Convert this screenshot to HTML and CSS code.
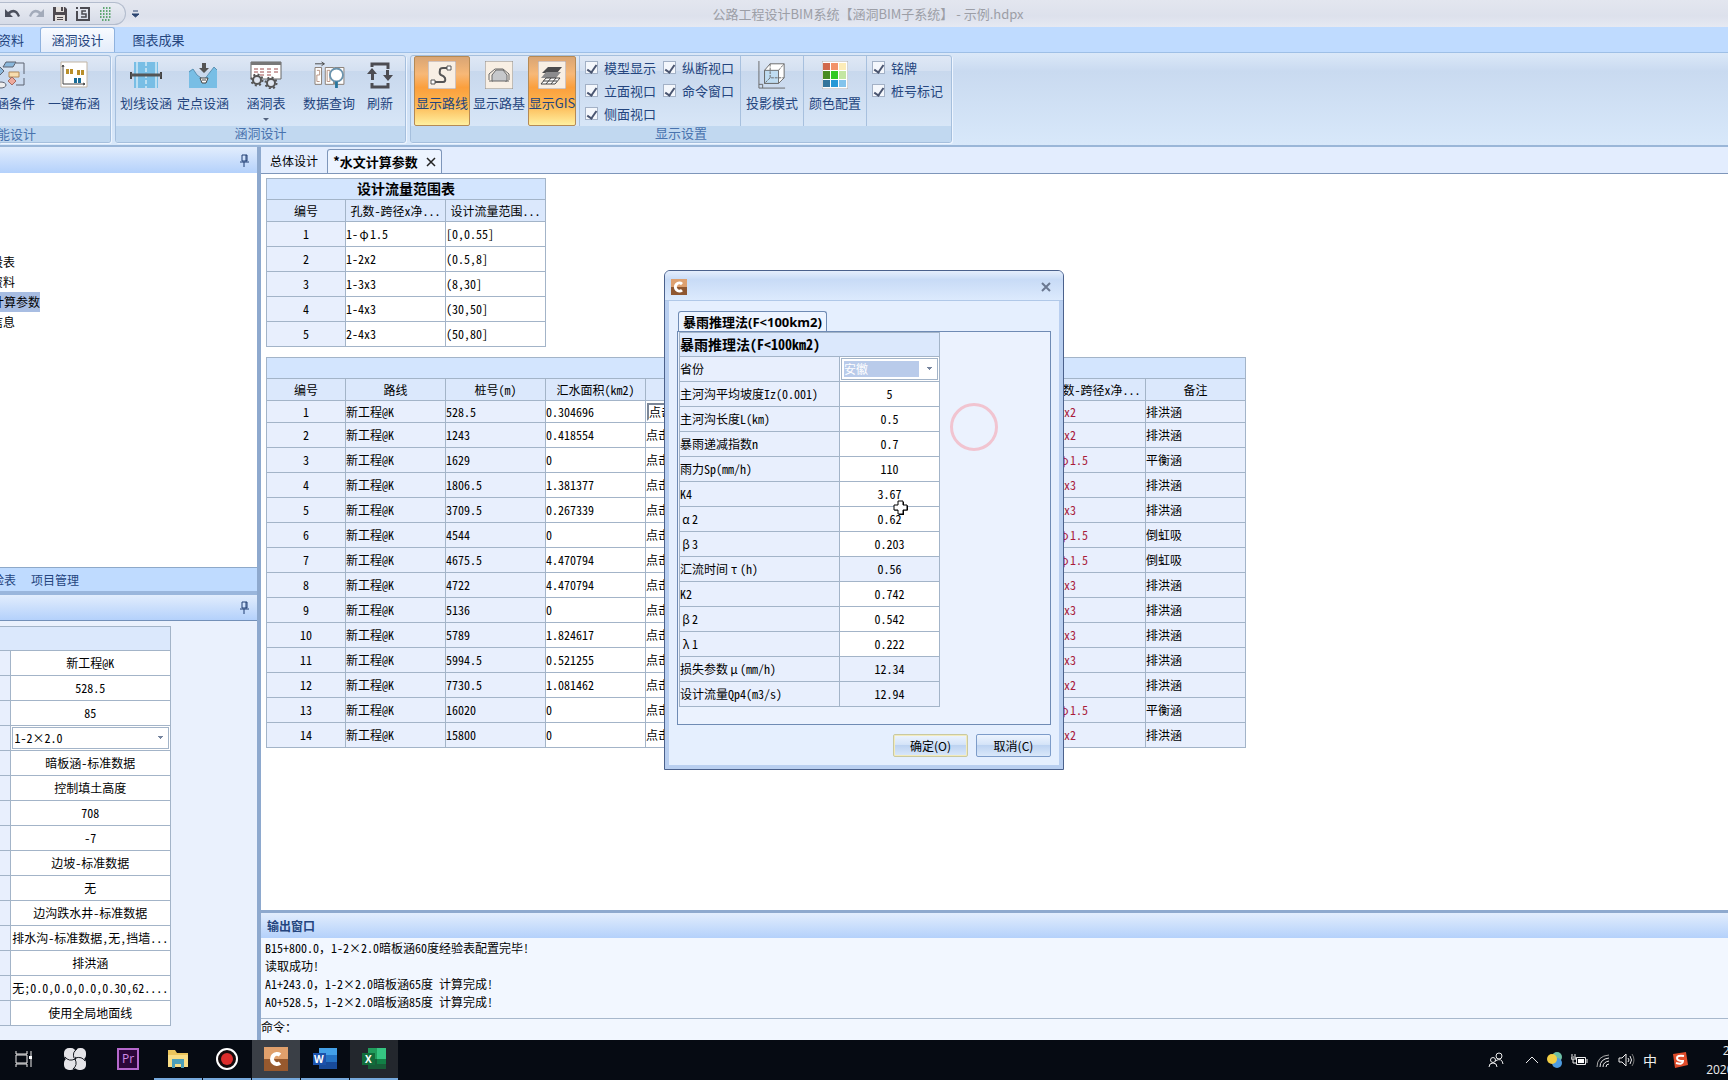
FILE: index.html
```html
<!DOCTYPE html>
<html lang="zh-CN">
<head>
    <meta charset="UTF-8">
    <title>公路工程设计BIM系统</title>
    <link rel="stylesheet" href="styles.css">
</head>
<body>
    <header class="title-bar">
        <div class="quick-bar">
            <button class="quick-btn" aria-label="撤销"><svg width="17" height="16" viewBox="0 0 17 16"><path d="M1 3v8h8L6 8q5-4 8 3l2-1Q12 0 4 6z" fill="#4b4f5c"/></svg></button>
            <button class="quick-btn" aria-label="重做"><svg width="17" height="16" viewBox="0 0 17 16"><path d="M16 3v8H8l3-3q-5-4-8 3l-2-1Q5 0 13 6z" fill="#a3abba"/></svg></button>
            <button class="quick-btn" aria-label="保存"><svg width="16" height="16" viewBox="0 0 16 16"><path d="M1 1h12l2 2v12H1z" fill="#4e4a50"/><path d="M4 1h8v5H4zM3 9h10v6H3z" fill="#e4e0dd"/><path d="M9 1h2v4H9zM5 11h6v1H5zM5 13h6v1H5z" fill="#4e4a50"/></svg></button>
            <button class="quick-btn" aria-label="另存"><svg width="16" height="16" viewBox="0 0 16 16"><path d="M5 2h9v12H2V5M2 1v2" fill="none" stroke="#4b4b52" stroke-width="2"/><path d="M11 5H7v3h4v3H6" fill="none" stroke="#4b4b52" stroke-width="1.500"/></svg></button>
            <button class="quick-btn" aria-label="网格"><svg width="16" height="16" viewBox="0 0 16 16"><path d="M5 2h9M2 5h12M2 8h12M2 11h12M4 14h9" stroke="#35924a" stroke-width="1.500" stroke-dasharray="1.500 1.500"/></svg></button>
        </div>
        <svg class="quick-more" width="8" height="8" viewBox="0 0 8 8"><path d="M1 1h5M0 4h7L3.500 7z" fill="#2b4470" stroke="#2b4470"/></svg>
        <h1>公路工程设计BIM系统【涵洞BIM子系统】 - 示例.hdpx</h1>
    </header>

    <nav class="ribbon-tabs">
        <button class="ribbon-tab cut">基础资料</button>
        <button class="ribbon-tab active">涵洞设计</button>
        <button class="ribbon-tab">图表成果</button>
    </nav>

    <section class="ribbon">
        <div class="group group-smart">
            <div class="group-body">
                <button class="tool"><svg width="34" height="28" viewBox="0 0 34 28"><path d="M14 1h10l-3 5H11zM4 10l4-4 4 4-4 4z" fill="#8bb8dc" stroke="#5c6270"/><path d="M24 2h8v11M18 13v4M24 24h8v-7M6 14v8h5" fill="none" stroke="#5c6270"/><path d="M17 11h10v5H17z" fill="#f7dcae" stroke="#b38a5a"/><path d="M16 20l4-4 4 4-4 4z" fill="#eda99b" stroke="#a66a60"/><ellipse cx="9" cy="24" rx="5" ry="3" fill="#eee" stroke="#5c6270"/></svg><span>布涵条件</span></button>
                <button class="tool"><svg width="28" height="28" viewBox="0 0 28 28"><path d="M1 1h26v25H1z" fill="#fff" stroke="#c1b5a5"/><path d="M3 4v19h22M2 6l1-2 1 2M23 22l2 1-2 1" fill="none" stroke="#444"/><path d="M6 8h3v5H6zM10 8h3v5h-3zM17 9h3v5h-3zM21 9h3v5h-3z" fill="#b98f2b"/><path d="M14 17h3v5h-3zM18 17h3v5h-3z" fill="#176c98"/></svg><span>一键布涵</span></button>
            </div>
            <div class="group-name cut">智能设计</div>
        </div>
        <div class="group group-culvert">
            <div class="group-body">
                <button class="tool"><svg width="32" height="28" viewBox="0 0 32 28"><path d="M4 1h24v26H4z" fill="#78bee5"/><path d="M7 1v26M26 1v26" stroke="#fff"/><path d="M16 1v26" stroke="#fff" stroke-dasharray="4 2"/><path d="M1 11v7M31 11v7" stroke="#444" stroke-width="2"/><path d="M1 14h30" stroke="#555" stroke-width="3"/></svg><span>划线设涵</span></button>
                <button class="tool"><svg width="30" height="28" viewBox="0 0 30 28"><path d="M1 10l4-2 4 6 7 5 10-13 3 3v18H1z" fill="#78bee5"/><path d="M1 11l4-3 4 6 7 5 10-13 3 3" fill="none" stroke="#5d93b4"/><path d="M14 2h4v5h3l-5 5-5-5h3z" fill="#555"/><path d="M12 17h8l-2 5h-4zM14 19h4" fill="#fff" stroke="#444"/></svg><span>定点设涵</span></button>
                <button class="tool wide"><svg width="32" height="28" viewBox="0 0 32 28"><path d="M1 1h30v17H1z" fill="#fff" stroke="#666"/><path d="M1 1h30v3H1z" fill="#777"/><path d="M4 8h4M10 8h4M17 8h4M24 8h4M4 11h4M10 11h4M17 11h4M24 11h4M10 14h4M17 14h4" stroke="#9c4b4b"/><circle cx="7" cy="19" r="4" fill="#dfe6f0" stroke="#555" stroke-width="2"/><circle cx="7" cy="19" r="5.500" fill="none" stroke="#555" stroke-width="2" stroke-dasharray="2 2.300"/><circle cx="21" cy="22" r="4" fill="#dfe6f0" stroke="#555" stroke-width="2"/><circle cx="21" cy="22" r="5.500" fill="none" stroke="#555" stroke-width="2" stroke-dasharray="2 2.300"/></svg><span>涵洞表</span><i class="arrow"></i></button>
                <button class="tool"><svg width="34" height="30" viewBox="0 0 34 30"><path d="M2 3h10M9 1l3 2-3 2" fill="none" stroke="#444"/><path d="M2 7h7v18H2zM13 7h9v18h-9zM23 7h10v18H23z" fill="#fff" stroke="#84796f"/><path d="M4 10h3v5H4v7h3M15 10h3v12h-3z" fill="none" stroke="#b58f7e"/><circle cx="25" cy="15" r="7" fill="#fff" stroke="#6c94ae" stroke-width="2"/><path d="M25 22v7" stroke="#26749d" stroke-width="3"/></svg><span>数据查询</span></button>
                <button class="tool slim"><svg width="26" height="28" viewBox="0 0 26 28"><path d="M5 6V3h16v5M5 22v4h16v-4" fill="none" stroke="#4c4c52" stroke-width="3"/><path d="M5 7l5 6H7v6H4v-6H0zM21 20l5-6h-4V9h-3v5h-3z" fill="#4c4c52"/></svg><span>刷新</span></button>
            </div>
            <div class="group-name">涵洞设计</div>
        </div>
        <div class="group group-view">
            <div class="group-body">
                <button class="tool on"><svg width="28" height="28" viewBox="0 0 28 28"><path d="M0 0h28v28H0z" fill="#f8efe4" stroke="#a99"/><path d="M7 21h8q3 0 2-4-1-2-4-3-2-1-1-5 0-2 3-2h4" fill="none" stroke="#555" stroke-width="2"/><path d="M3 19h4v4H3zM19 5h4v4h-4z" fill="#fff" stroke="#555"/></svg><span>显示路线</span></button>
                <button class="tool"><svg width="28" height="28" viewBox="0 0 28 28"><path d="M0 0h28v28H0z" fill="#f8efe4" stroke="#888"/><path d="M4 19v-6l6-5h8l6 5v6M4 20h4M20 20h4" fill="none" stroke="#666"/><path d="M7 20v-6l4-5h7l4 5v6z" fill="#c6c8cb" stroke="#666"/></svg><span>显示路基</span></button>
                <button class="tool on slim"><svg width="28" height="28" viewBox="0 0 28 28"><path d="M0 0h28v28H0z" fill="#f8efe4" stroke="#a99"/><path d="M10 6h14l-5 6H4z" fill="#4b4b4d"/><path d="M8 11h15l-5 6H3z" fill="#8b8b8d"/><path d="M8 17h14l-5 6H3zM5 20h14M13 17l-5 6M18 17l-5 6" fill="#fff" stroke="#444"/></svg><span>显示GIS</span></button>
                <div class="checks checks-two">
                    <label><input type="checkbox" checked>模型显示</label>
                    <label><input type="checkbox" checked>纵断视口</label>
                    <label><input type="checkbox" checked>立面视口</label>
                    <label><input type="checkbox" checked>命令窗口</label>
                    <label><input type="checkbox" checked>侧面视口</label>
                </div>
                <div class="sep"><button class="tool"><svg width="30" height="30" viewBox="0 0 30 30"><path d="M1 0v29h28M1 25h4v4" fill="none" stroke="#666"/><path d="M7 10l6-7h15v15l-6 6H7z" fill="#fff" stroke="#666"/><path d="M7 10h15v14H7z" fill="#bfdcf1" stroke="#666"/><path d="M22 10l6-7M13 3v15h15M13 18l-6 6" fill="none" stroke="#666" stroke-dasharray="3 1"/></svg><span>投影模式</span></button></div>
                <div class="sep"><button class="tool"><svg width="26" height="28" viewBox="0 0 26 28"><path d="M0 0h26v28H0z" fill="#fff" stroke="#aaa"/><path d="M1 2h7v7H1z" fill="#d1694b"/><path d="M9 2h7v7H9z" fill="#f29268"/><path d="M17 2h7v7h-7z" fill="#fcecb8"/><path d="M1 10h7v8H1z" fill="#478b21"/><path d="M9 10h7v8H9z" fill="#31c923"/><path d="M17 10h7v8h-7z" fill="#c3e6a1"/><path d="M1 19h7v7H1z" fill="#33759b"/><path d="M9 19h7v7H9z" fill="#2799d6"/><path d="M17 19h7v7h-7z" fill="#83c4ec"/></svg><span>颜色配置</span></button></div>
                <div class="checks">
                    <label><input type="checkbox" checked>铭牌</label>
                    <label><input type="checkbox" checked>桩号标记</label>
                </div>
            </div>
            <div class="group-name">显示设置</div>
        </div>
    </section>

    <main class="workspace">
        <aside class="side">
            <div class="panel-head"><svg class="pin" width="9" height="13" viewBox="0 0 9 13"><path d="M2 1h5v6H2zM0 8h9M4 8v5M6 1v6" fill="none" stroke="#1f3d73"/></svg></div>
            <ul class="tree">
                <li><span class="w1">分段表</span></li>
                <li><span class="w1">基本资料</span></li>
                <li><span class="w2">水文计算参数</span></li>
                <li><span class="w1">项目信息</span></li>
            </ul>
            <div class="side-tabs">
                <button class="cut">经验表</button>
                <button>项目管理</button>
            </div>
            <div class="panel-head props-head"><svg class="pin" width="9" height="13" viewBox="0 0 9 13"><path d="M2 1h5v6H2zM0 8h9M4 8v5M6 1v6" fill="none" stroke="#1f3d73"/></svg></div>
            <div class="props">
                <table class="grid prop-table">
                    <colgroup><col class="c-edge"><col class="c-prop"></colgroup>
                    <tbody id="propBody"><tr class="prop-title"><td colspan="2"></td></tr></tbody>
                </table>
            </div>
        </aside>

        <section class="docs">
            <div class="doc-tabs">
                <button class="doc-tab">总体设计</button>
                <button class="doc-tab current">*水文计算参数 <svg width="10" height="10" viewBox="0 0 10 10"><path d="M1 1l8 8M9 1L1 9" stroke="#222" stroke-width="1.500"/></svg></button>
            </div>
            <div class="sheet">
                <table class="grid range-table">
                    <colgroup><col class="c-no"><col class="c-100"><col class="c-100"></colgroup>
                    <thead>
                        <tr class="caption"><th colspan="3">设计流量范围表</th></tr>
                        <tr><th>编号</th><th>孔数-跨径x净...</th><th>设计流量范围...</th></tr>
                    </thead>
                    <tbody>
                        <tr><td class="no">1</td><td>1-<i class="greek">φ</i>1.5</td><td>[0,0.55]</td></tr>
                        <tr><td class="no">2</td><td>1-2x2</td><td>(0.5,8]</td></tr>
                        <tr><td class="no">3</td><td>1-3x3</td><td>(8,30]</td></tr>
                        <tr><td class="no">4</td><td>1-4x3</td><td>(30,50]</td></tr>
                        <tr><td class="no">5</td><td>2-4x3</td><td>(50,80]</td></tr>
                    </tbody>
                </table>
                <table class="grid flow-table">
                    <colgroup><col class="c-no"><col class="c-100" span="9"></colgroup>
                    <thead>
                        <tr class="caption"><th colspan="10">水文计算表</th></tr>
                        <tr><th>编号</th><th>路线</th><th>桩号(m)</th><th>汇水面积(km2)</th><th></th><th></th><th></th><th></th><th>孔数-跨径x净...</th><th>备注</th></tr>
                    </thead>
                    <tbody id="flowBody"></tbody>
                </table>
            </div>
            <div class="output">
                <h2>输出窗口</h2>
                <div class="log">
                    <p>B15+800.0，1-2×2.0暗板涵60度经验表配置完毕!</p>
                    <p>读取成功!</p>
                    <p>A1+243.0，1-2×2.0暗板涵65度 计算完成!</p>
                    <p>A0+528.5，1-2×2.0暗板涵85度 计算完成!</p>
                </div>
                <label class="command">命令：<input type="text"></label>
            </div>
        </section>
    </main>

    <div class="dialog" role="dialog" aria-label="暴雨推理法">
        <div class="dialog-title">
            <svg width="16" height="16" viewBox="0 0 16 16"><path d="M0 0h16v8H0z" fill="#dda070"/><path d="M0 8h16v8H0z" fill="#8f5731"/><path d="M11 5a4 4 0 1 0 0 6" fill="none" stroke="#fff" stroke-width="3"/></svg>
            <button aria-label="关闭"><svg width="10" height="10" viewBox="0 0 10 10"><path d="M1 1l8 8M9 1L1 9" stroke="#6b7891" stroke-width="2"/></svg></button>
        </div>
        <div class="dialog-body">
            <button class="dialog-tab">暴雨推理法(F&lt;100km2)</button>
            <div class="dialog-page">
                <table class="grid calc-table">
                    <colgroup><col class="c-label"><col class="c-100"></colgroup>
                    <thead><tr><th colspan="2">暴雨推理法(F&lt;100km2)</th></tr></thead>
                    <tbody id="calcBody">
                        <tr><td class="ro"><label for="province">省份</label></td><td class="combo"><select id="province"><option>安徽</option></select></td></tr>
                    </tbody>
                </table>
            </div>
            <div class="dialog-buttons">
                <button class="default">确定(O)</button>
                <button>取消(C)</button>
            </div>
        </div>
    </div>
    <div class="click-ring"></div>
    <svg class="cursor" width="16" height="16" viewBox="0 0 16 16"><path d="M6 2v3.500H1.500v5H6V15h5v-4.500h4v-5h-4V2z" fill="#000"/><path d="M5 1h5v4h4v5h-4v4H5v-4H1V5h4z" fill="#fff" stroke="#000"/></svg>

    <footer class="taskbar">
        <button class="task" aria-label="任务视图"><svg width="18" height="18" viewBox="0 0 18 18"><path d="M1 1v3h11V1M1 17v-3h11v3M1 5h11v8H1zM16 1v16" fill="none" stroke="#eee"/><path d="M14 6h3v3h-3z" fill="#fff"/></svg></button>
        <button class="task second" aria-label="助手"><svg width="22" height="22" viewBox="0 0 22 22"><rect x="0" y="0" width="12" height="12" rx="5" fill="#e4e4e8"/><rect x="11" y="0" width="11" height="12" rx="5" fill="#e4e4e8"/><rect x="0" y="10" width="12" height="12" rx="5" fill="#e4e4e8"/><rect x="10" y="10" width="12" height="12" rx="5" fill="#e4e4e8"/><path d="M13 1Q8 4 10 10M21 13q-3-5-10-3M9 21q5-4 2-10M1 9q4 5 10 2" fill="none" stroke="#15181f"/></svg></button>
        <button class="task third" aria-label="Premiere"><svg width="22" height="22" viewBox="0 0 22 22"><path d="M1 1h20v20H1z" fill="#2b0638" stroke="#b568cc" stroke-width="2"/><text x="5" y="15" class="pr-text">Pr</text></svg></button>
        <button class="task running" aria-label="文件管理器"><svg width="22" height="20" viewBox="0 0 22 20"><path d="M1 1h7l2 3h11v13H1z" fill="#eac45c"/><path d="M1 6h20v12H1z" fill="#f8dd86"/><path d="M5 10h12v9h-3v-4H8v4H5z" fill="#4c9fb9"/></svg></button>
        <button class="task running" aria-label="录屏"><svg width="22" height="22" viewBox="0 0 22 22"><circle cx="11" cy="11" r="10" fill="#160b0c" stroke="#fff" stroke-width="2"/><circle cx="11" cy="11" r="6" fill="#dc2d2c"/></svg></button>
        <button class="task running focus" aria-label="涵洞系统"><svg width="24" height="24" viewBox="0 0 24 24"><path d="M0 0h24v12H0z" fill="#e0a06c"/><path d="M0 12h24v12H0z" fill="#97592e"/><path d="M16 8a5 5 0 1 0 0 8" fill="none" stroke="#fff" stroke-width="4"/></svg></button>
        <button class="task running" aria-label="Word"><svg width="26" height="22" viewBox="0 0 26 22"><path d="M7 0h18v7H7z" fill="#43a0e8"/><path d="M7 7h18v7H7z" fill="#2573c4"/><path d="M7 14h18v7H7z" fill="#184b9a"/><path d="M1 5h13v12H1z" fill="#1b52ac"/><text x="2" y="15" class="office-text">W</text></svg></button>
        <button class="task running hover" aria-label="Excel"><svg width="26" height="22" viewBox="0 0 26 22"><path d="M7 0h18v11H7z" fill="#219c5c"/><path d="M16 0h9v11h-9z" fill="#35c481"/><path d="M7 11h18v10H7z" fill="#175e38"/><path d="M16 11h9v5h-9z" fill="#128046"/><path d="M1 5h13v12H1z" fill="#126c3b"/><text x="4" y="15" class="office-text">X</text></svg></button>
        <div class="tray">
            <svg width="16" height="16" viewBox="0 0 16 16"><g fill="none" stroke="#eee"><circle cx="11" cy="4" r="3"/><circle cx="5" cy="8" r="2.500"/><path d="M1 15q0-4 4-4t4 4M7 9q7-4 8 3"/></g></svg>
            <svg class="tray-up" width="14" height="8" viewBox="0 0 14 8"><path d="M1 7l6-6 6 6" fill="none" stroke="#eee"/></svg>
            <svg width="16" height="16" viewBox="0 0 16 16"><circle cx="10" cy="5" r="5" fill="#6ec0a5"/><circle cx="10" cy="11" r="5" fill="#4e9be0"/><circle cx="5" cy="7" r="5" fill="#f2cf45"/></svg>
            <svg width="17" height="12" viewBox="0 0 17 12"><path d="M5.500 3.500h9v7h-9z" fill="none" stroke="#eee"/><path d="M7 5h6v4H7z" fill="#fff"/><path d="M16 5v4M1 0v2M4 0v2M0 3h5v2H0zM2 5v4h3" stroke="#eee" fill="none"/></svg>
            <svg width="14" height="14" viewBox="0 0 14 14"><g fill="none" stroke="#aaa"><path d="M1 14Q1 3 13 2"/><path d="M4 14q0-8 9-9M7 14q0-5 6-6M10 14q0-3 3-3" stroke="#eee"/></g></svg>
            <svg width="17" height="14" viewBox="0 0 17 14"><g fill="none" stroke="#eee"><path d="M1 5h3l4-4v12L4 9H1z"/><path d="M10 5q2 2 0 4M12 3q3 4 0 8"/><path d="M14 1q4 6 0 12" stroke="#777"/></g></svg>
            <span class="ime">中</span>
            <svg class="sogou" width="16" height="16" viewBox="0 0 16 16"><path d="M1 2l13-2 2 13-13 3z" fill="#df4d2b"/><path d="M12 4Q5 3 5 6t6 3q0 4-7 2" fill="none" stroke="#fff" stroke-width="2"/></svg>
            <div class="clock">22:10<br>2020/12/12</div>
        </div>
    </footer>

    <script>
        // 希腊字母占一个全角
        const greek = s => s.replace(/[αβφτλμ]/g, '<i class="greek">$&</i>');

        // 路线均为 新工程@K：桩号、汇水面积、孔跨、备注
        const culverts = [
            ['528.5', '0.304696', '1-2x2', '排洪涵'],
            ['1243', '0.418554', '1-2x2', '排洪涵'],
            ['1629', '0', '1-φ1.5', '平衡涵'],
            ['1806.5', '1.381377', '1-4x3', '排洪涵'],
            ['3709.5', '0.267339', '1-3x3', '排洪涵'],
            ['4544', '0', '1-φ1.5', '倒虹吸'],
            ['4675.5', '4.470794', '1-φ1.5', '倒虹吸'],
            ['4722', '4.470794', '2-4x3', '排洪涵'],
            ['5136', '0', '1-3x3', '排洪涵'],
            ['5789', '1.824617', '1-4x3', '排洪涵'],
            ['5994.5', '0.521255', '1-3x3', '排洪涵'],
            ['7730.5', '1.081462', '1-2x2', '排洪涵'],
            ['16020', '0', '1-φ1.5', '平衡涵'],
            ['15800', '0', '1-2x2', '排洪涵']
        ];
        document.getElementById('flowBody').innerHTML = culverts.map((c, i) => `
            <tr><td class="no">${i + 1}</td><td class="ro">新工程@K</td><td class="ro">${c[0]}</td><td>${c[1]}</td>
            <td><button class="calc-btn">点击计算</button></td><td></td><td></td><td></td><td class="ro span">${greek(c[2])}</td><td class="ro">${c[3]}</td></tr>`).join('');

        // 第三项为 1 表示计算结果，只读
        const params = [
            ['主河沟平均坡度Iz(0.001)', '5'],
            ['主河沟长度L(km)', '0.5'],
            ['暴雨递减指数n', '0.7'],
            ['雨力Sp(mm/h)', '110'],
            ['K4', '3.67'],
            ['α2', '0.62'],
            ['β3', '0.203'],
            ['汇流时间τ(h)', '0.56', 1],
            ['K2', '0.742'],
            ['β2', '0.542'],
            ['λ1', '0.222'],
            ['损失参数μ(mm/h)', '12.34', 1],
            ['设计流量Qp4(m3/s)', '12.94', 1]
        ];
        document.getElementById('calcBody').innerHTML += params.map(p => `
            <tr><td class="ro">${greek(p[0])}</td><td class="val${p[2] ? ' ro' : ''}">${p[1]}</td></tr>`).join('');

        const props = ['新工程@K', '528.5', '85', null, '暗板涵-标准数据', '控制填土高度', '708', '-7', '边坡-标准数据',
            '无', '边沟跌水井-标准数据', '排水沟-标准数据,无,挡墙...', '排洪涵', '无;0.0,0.0,0.0,0.30,62....', '使用全局地面线'];
        document.getElementById('propBody').innerHTML += props.map(p => p === null
            ? '<tr><td class="ro"></td><td class="combo"><select aria-label="孔跨"><option>1-2×2.0</option></select></td></tr>'
            : `<tr><td class="ro"></td><td class="val">${p}</td></tr>`).join('');
    </script>
</body>
</html>
```

FILE: styles.css
```css
* {
    box-sizing: border-box;
}
body {
    margin: 0;
    height: 100vh;
    display: flex;
    flex-direction: column;
    overflow: hidden;
    background: #fff;
    color: #000;
    font: 12px/16px "Noto Sans Mono CJK SC", "Noto Sans CJK SC", sans-serif;
}
button, input, select {
    font: inherit;
    color: inherit;
    margin: 0;
    padding: 0;
    border: none;
    background: none;
}
svg {
    display: block;
    flex: none;
}
.title-bar, .ribbon-tabs, .ribbon, .taskbar {
    flex: none;
    font-family: "Noto Sans CJK SC", sans-serif;
    font-size: 13px;
}

/* 标题栏 */
.title-bar {
    display: flex;
    align-items: center;
    height: 27px;
    background: linear-gradient(#e3e6ef, #dde1ec 60%, #e6e9f2);
    position: relative;
}
.quick-bar {
    display: flex;
    align-items: center;
    gap: 7px;
    width: 126px;
    height: 23px;
    padding-left: 4px;
    border: 1px solid #b3bccd;
    border-left: none;
    border-radius: 0 12px 12px 0;
    background: linear-gradient(#e9ecf3, #d6dbe7);
}
.quick-more {
    margin-left: 6px;
}
h1 {
    position: absolute;
    left: 0;
    right: 0;
    margin: 0;
    padding-left: 8px;
    text-align: center;
    font-size: 13px;
    font-weight: normal;
    color: #9c9ea6;
}

/* 功能区 */
.ribbon-tabs {
    display: flex;
    align-items: flex-end;
    height: 26px;
    background: #bfdbff;
    border-bottom: 1px solid #9ebfe6;
    color: #24457e;
}
.ribbon-tab {
    width: 75px;
    height: 25px;
    margin-right: 6px;
}
.ribbon-tab.active {
    border: 1px solid #8fb2de;
    border-bottom: none;
    border-radius: 3px 3px 0 0;
    background: linear-gradient(#f8fbff, #e3ecfa);
}
.cut {
    display: flex;
    justify-content: flex-end;
    align-items: center;
    overflow: hidden;
    white-space: nowrap;
}
.ribbon-tab.cut {
    width: 24px;
    margin-right: 16px;
}
.ribbon {
    display: flex;
    gap: 4px;
    height: 94px;
    padding: 2px 0;
    background: linear-gradient(#dbe8f8, #c9daf0 20%, #d8e8fa);
    border-bottom: 2px solid #9ab6d8;
    color: #24457e;
}
.group {
    display: flex;
    flex-direction: column;
    border: 1px solid #a5bfdd;
    border-radius: 3px;
    background: linear-gradient(#dfe8f5, #d4e0f1 17%, #c8d8ed 18%, #dceafa);
    box-shadow: 1px 1px 0 #eef5ff;
    overflow: hidden;
}
.group-smart {
    width: 111px;
    border-left: none;
    border-radius: 0 3px 3px 0;
}
.group-culvert {
    width: 291px;
}
.group-view {
    width: 542px;
}
.group-body {
    flex: 1;
    display: flex;
    gap: 3px;
    padding: 0 3px;
}
.group-culvert .group-body {
    gap: 5px;
    padding-left: 4px;
}
.group-smart .group-body {
    justify-content: flex-end;
    gap: 13px;
    padding-right: 10px;
}
.group-name {
    height: 16px;
    background: #c1d8f0;
    text-align: center;
    line-height: 14px;
    color: #4973ae;
}
.group-smart .group-name {
    padding-right: 74px;
}
.tool {
    flex: none;
    width: 52px;
    height: 70px;
    display: flex;
    flex-direction: column;
    align-items: center;
    justify-content: flex-start;
    padding-top: 5px;
    white-space: nowrap;
}
.tool svg {
    height: 28px;
}
.tool span {
    margin-top: 6px;
}
.tool.wide {
    width: 64px;
}
.tool.slim {
    width: 40px;
}
.tool.on {
    width: 56px;
    border: 1px solid #b58a55;
    border-radius: 2px;
    padding-top: 4px;
    background: linear-gradient(#d9a574, #f7b877 25%, #fb9f3c 45%, #fcb651 70%, #fff0a0);
}
.tool.on.slim {
    width: 48px;
}
.arrow {
    margin-top: 7px;
    border: 3px solid transparent;
    border-top-color: #53637e;
}
.checks {
    display: grid;
    grid-auto-rows: 23px;
    gap: 0;
    padding-left: 5px;
    border-left: 1px solid #a7c0de;
}
.checks-two {
    grid-template-columns: 78px 76px;
    width: 161px;
    margin-right: -3px;
}
.checks label {
    display: flex;
    align-items: center;
    gap: 6px;
    white-space: nowrap;
}
.checks input {
    appearance: none;
    width: 13px;
    height: 13px;
    border: 1px solid #a3b1c6;
    background: #f4f7fc;
    display: grid;
    place-items: center;
}
.checks input:checked::before {
    content: "";
    width: 4px;
    height: 8px;
    border: solid #4a5570;
    border-width: 0 2px 2px 0;
    transform: rotate(35deg);
}
.sep {
    padding: 0 2px 0 5px;
    border-left: 1px solid #a7c0de;
}

/* 工作区 */
.workspace {
    flex: 1;
    min-height: 0;
    display: flex;
}
.side {
    flex: none;
    width: 261px;
    border-right: 4px solid #8ea9ce;
    display: flex;
    flex-direction: column;
    background: #eaf1fd;
}
.panel-head {
    flex: none;
    height: 26px;
    display: flex;
    align-items: center;
    justify-content: flex-end;
    padding-right: 8px;
    background: linear-gradient(#e2edfd, #b4d1fb);
}
.props-head {
    border-bottom: 1px solid #7390b8;
}
.tree {
    flex: 1;
    margin: 0;
    padding: 79px 0 0;
    list-style: none;
    background: #fff;
    border-bottom: 1px solid #8ea9c9;
}
.tree li {
    height: 20px;
}
.tree span {
    display: flex;
    justify-content: flex-end;
    overflow: hidden;
    white-space: nowrap;
    line-height: 20px;
}
.tree .w1 {
    width: 15px;
}
.tree .w2 {
    width: 40px;
    background: #a8bde2;
}
.side-tabs {
    flex: none;
    display: flex;
    gap: 15px;
    height: 27px;
    background: #bfdbff;
    border-bottom: 4px solid #9ab6dc;
    color: #24457e;
}
.side-tabs .cut {
    width: 16px;
}
.props {
    flex: none;
    height: 419px;
    padding-top: 5px;
}
.grid {
    border-collapse: collapse;
    table-layout: fixed;
}
.grid td, .grid th {
    height: 25px;
    padding: 0;
    border: 1px solid #a3b4c8;
    overflow: hidden;
    white-space: nowrap;
    font-weight: normal;
    background: #fff;
    line-height: 16px;
}
.grid th {
    height: 22px;
    background: #dbe8fc;
}
.grid .caption th {
    height: 21px;
    padding-bottom: 2px;
    background: #d3e5fe;
    font-size: 14px;
    font-weight: bold;
}
.grid .no {
    background: #e8effd;
    text-align: center;
}
.grid .ro {
    background: #e8effd;
}
.grid .val {
    text-align: center;
}
.grid .span {
    color: #a81c3c;
}
.greek {
    display: inline-block;
    width: 12px;
    text-align: center;
    font-style: normal;
}
.calc-btn {
    display: block;
}
.flow-table tr:first-child .calc-btn {
    width: 96px;
    height: 18px;
    margin-left: 1px;
    border: 2px solid #7c8797;
    border-color: #7c8797 #fff #fff #7c8797;
    line-height: 14px;
    text-align: left;
}
.c-edge { width: 10px; }
.c-prop { width: 160px; }
.c-no { width: 79px; }
.c-100 { width: 100px; }
.c-label { width: 160px; }
.prop-table {
    width: 171px;
}
.prop-table td:first-child {
    border-left: none;
}
.grid .prop-title td {
    height: 24px;
    background: #dbe8fc;
}
.grid .combo {
    padding: 0 1px;
}
.combo select {
    display: block;
    width: 100%;
    height: 22px;
    padding: 0 2px;
    appearance: none;
    border: 1px solid #a3b4c8;
    background: linear-gradient(#75849e, #75849e) no-repeat right 5px top 8px / 5px 1px,
        linear-gradient(#75849e, #75849e) no-repeat right 6px top 9px / 3px 1px,
        linear-gradient(#75849e, #75849e) no-repeat right 7px top 10px / 1px 1px, #fff;
}

/* 文档区 */
.docs {
    flex: 1;
    min-width: 0;
    display: flex;
    flex-direction: column;
}
.doc-tabs {
    flex: none;
    display: flex;
    align-items: flex-end;
    height: 27px;
    border-bottom: 1px solid #7e96ba;
    background: #e3edfe;
}
.doc-tab {
    width: 66px;
    height: 24px;
}
.doc-tab.current {
    display: flex;
    align-items: center;
    justify-content: center;
    gap: 8px;
    width: 115px;
    border: 1px solid #7e96ba;
    border-bottom: none;
    border-radius: 3px 3px 0 0;
    background: #edf4ff;
    font-size: 13px;
    font-weight: bold;
}
.sheet {
    flex: 1;
    min-height: 0;
    overflow: hidden;
    padding: 4px 5px;
}
.range-table {
    width: 280px;
}
.flow-table {
    width: 980px;
    margin-top: 10px;
}
.flow-table tr:first-child td {
    height: 22px;
}
.output {
    flex: none;
    border-top: 3px solid #8ea9ce;
    background: #f2f7ff;
}
h2 {
    margin: 0;
    height: 25px;
    padding-left: 6px;
    background: linear-gradient(#e2edfd, #b4d1fb);
    color: #24457e;
    font: bold 12px/25px "Noto Sans CJK SC", sans-serif;
}
.log {
    height: 81px;
    padding: 1px 4px;
    border-bottom: 1px solid #a8b8cc;
}
.log p {
    margin: 0;
    line-height: 18px;
}
.command {
    display: flex;
    height: 21px;
    line-height: 16px;
}
.command input {
    flex: 1;
}

/* 对话框 */
.dialog {
    position: absolute;
    left: 664px;
    top: 270px;
    width: 400px;
    border: 1px solid #4b618c;
    border-radius: 6px 6px 0 0;
    background: #b9cff0;
    padding: 0 4px 4px;
}
.dialog-title {
    height: 30px;
    margin: 0 -4px;
    padding: 2px 12px 0 6px;
    display: flex;
    align-items: center;
    justify-content: space-between;
    border-radius: 5px 5px 0 0;
    border-bottom: 1px solid #b0c8e8;
    background: linear-gradient(#e5eefc, #c8dbf6 30%, #dceafd);
}
.dialog-body {
    padding: 10px 8px 8px;
    background: #e5effe;
}
.dialog-tab {
    display: block;
    width: 149px;
    height: 20px;
    margin-left: 1px;
    border: 1px solid #6f8bb4;
    border-bottom: none;
    border-radius: 3px 3px 0 0;
    background: #edf4ff;
    font: bold 13px/18px "Open Sans", "Noto Sans CJK SC", sans-serif;
    white-space: nowrap;
}
.dialog-page {
    height: 394px;
    padding: 0 1px;
    border: 1px solid #6f8bb4;
    background: #ebf2fe;
}
.calc-table {
    width: 260px;
}
.grid.calc-table th {
    height: 24px;
    padding-bottom: 2px;
    text-align: left;
    font-size: 14px;
    font-weight: bold;
}
#province {
    color: #fff;
    background: linear-gradient(#75849e, #75849e) no-repeat right 5px top 8px / 5px 1px,
        linear-gradient(#75849e, #75849e) no-repeat right 6px top 9px / 3px 1px,
        linear-gradient(#75849e, #75849e) no-repeat right 7px top 10px / 1px 1px,
        linear-gradient(#b9cbea, #b9cbea) no-repeat 2px 2px / 75px 16px, #fff;
}
.dialog-buttons {
    display: flex;
    justify-content: flex-end;
    gap: 8px;
    padding-top: 9px;
}
.dialog-buttons button {
    width: 75px;
    height: 23px;
    border: 1px solid #7d9cc9;
    border-radius: 2px;
    background: linear-gradient(#edf4fe, #d5e4f8 45%, #bdd3f1 50%, #dae8fa);
    font-family: "Noto Sans CJK SC", sans-serif;
}
.dialog-buttons .default {
    border-color: #c9c9a0;
    box-shadow: inset 0 0 0 1px #f3ebbc;
}
.click-ring {
    position: absolute;
    left: 950px;
    top: 403px;
    width: 48px;
    height: 48px;
    border: 3px solid #f1c4d0;
    border-radius: 50%;
}
.cursor {
    position: absolute;
    left: 893px;
    top: 500px;
}

/* 任务栏 */
.taskbar {
    display: flex;
    gap: 1px;
    height: 40px;
    background: #060b13;
    color: #eee;
}
.task {
    width: 48px;
    display: grid;
    place-items: center;
    border-bottom: 2px solid transparent;
}
.task.second {
    width: 52px;
}
.task.third {
    width: 51px;
}
.task.running {
    border-bottom-color: #76a9dc;
}
.task.focus {
    background: #3a3f46;
}
.task.hover {
    background: #23272d;
}
.pr-text {
    font: 12px "Open Sans", sans-serif;
    fill: #d08be6;
}
.office-text {
    font: bold 10px "Open Sans", sans-serif;
    fill: #fff;
}
.tray {
    width: 240px;
    margin-left: auto;
    display: flex;
    align-items: center;
    gap: 8px;
    overflow: hidden;
}
.tray-up {
    margin-left: 13px;
}
.ime {
    font-size: 14px;
}
.sogou {
    margin-left: 7px;
}
.clock {
    flex: none;
    width: 66px;
    margin-left: 9px;
    text-align: center;
    font: 12px/19px "Open Sans", sans-serif;
}
```
